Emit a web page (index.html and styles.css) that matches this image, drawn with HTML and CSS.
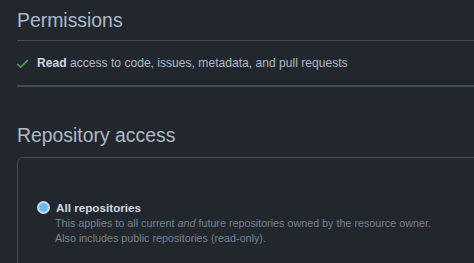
FILE: index.html
```html
<!DOCTYPE html>
<html>
  <head>
    <meta charset="utf-8">
    <meta name="viewport" content="width=device-width, initial-scale=1">
    <title>Permissions</title>
    <link rel="stylesheet" href="styles.css">
  </head>

  <body class="dark-dimmed">
    <main class="settings">
      <h2 class="subhead">
        Permissions
      </h2>

      <ul class="permission-list">
        <li class="permission">
          <svg class="permission__icon" viewBox="0 0 16 16" width="15" height="15" aria-hidden="true">
            <path d="M13.78 4.22a.75.75 0 0 1 0 1.06l-7.25 7.250a.75.75 0 0 1-1.060 0L2.22 9.28a.751.751 0 0 1 .018-1.042.751.751 0 0 1 1.042-.018L6 10.94l6.72-6.72a.75.75 0 0 1 1.06 0Z"></path>
          </svg>
          <span><strong>Read</strong> access to code, issues, metadata, and pull requests</span>
        </li>
      </ul>

      <h2 class="subhead subhead--plain">
        Repository access
      </h2>

      <section class="box">
        <label class="radio">
          <input
            type="radio"
            name="repository-access"
            class="radio__input"
            checked
          >
          <span class="radio__body">
            <span class="radio__title">All repositories</span>
            <span class="radio__note">
              This applies to all current <em>and</em> future repositories owned by the resource owner.<br>
              Also includes public repositories (read-only).
            </span>
          </span>
        </label>
      </section>
    </main>
  </body>
</html>
```

FILE: styles.css
```css
:root {
  --canvas: #22272e;
  --border: #444c56;
  --fg: #adbac7;
  --fg-strong: #cdd9e5;
  --fg-muted: #768390;
  --success: #57ab5a;
  --accent: #6cb6ff;
}

body {
  margin: 0;
  overflow: hidden;
  font-family: 'Liberation Sans', Arial, sans-serif;
}

.dark-dimmed {
  background-color: var(--canvas);
  color: var(--fg);
}

.settings {
  width: 540px;
  padding: 0 0 0 17px;
}

.subhead {
  margin: 0;
  padding: 5px 0;
  font-size: 19.4px;
  font-weight: 400;
  line-height: 30px;
  color: var(--fg);
  border-bottom: 1px solid var(--border);
}

.subhead--plain {
  margin-top: 28px;
  padding-bottom: 7px;
  border-bottom: 0;
}

.permission-list {
  margin: 0;
  padding: 0;
  list-style: none;
  border-bottom: 2px solid var(--border);
}

.permission {
  display: flex;
  align-items: center;
  gap: 7px;
  padding: 12px 0 11px;
  font-size: 12.1px;
  line-height: 21px;
}

.permission strong {
  color: var(--fg-strong);
}

.permission__icon {
  fill: var(--success);
  flex: none;
  margin-left: -2px;
}

.box {
  border: 1px solid var(--border);
  border-radius: 6px;
  padding: 42px 19px 40px;
}

.radio {
  display: flex;
  align-items: flex-start;
  gap: 6px;
}

.radio__input {
  appearance: none;
  flex: none;
  width: 13px;
  height: 13px;
  margin: 1px 0 0;
  border-radius: 50%;
  border: 2px solid var(--fg-strong);
  background-color: var(--accent);
}

.radio__body {
  display: flex;
  flex-direction: column;
}

.radio__title {
  font-size: 11.7px;
  font-weight: 700;
  line-height: 15px;
  color: var(--fg-strong);
}

.radio__note {
  margin-top: 1px;
  margin-left: -1px;
  font-size: 10.75px;
  line-height: 15px;
  color: var(--fg-muted);
}
```
